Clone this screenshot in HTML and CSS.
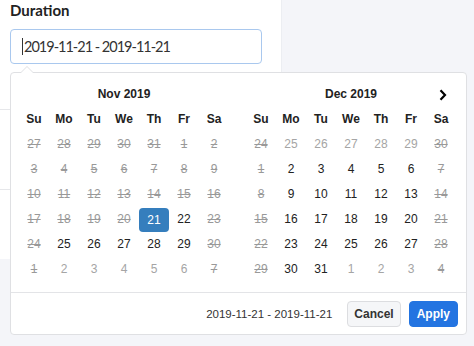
FILE: index.html
```html
<!DOCTYPE html>
<html lang="en">
<head>
  <meta charset="UTF-8" />
  <title>Duration picker</title>
  <link rel="stylesheet" href="styles.css">
</head>
<body>
  <div class="panel">
    <label class="label">Duration</label>
    <div class="field"><span class="caret"></span>2019-11-21 - 2019-11-21</div>
    <div class="panel-row first"></div>
    <div class="panel-row"></div>
  </div>

  <div class="picker">
    <div class="calendars">
      <div class="cal" id="calLeft">
        <div class="month">Nov 2019</div>
        <div class="nav"></div>
      </div>
      <div class="cal" id="calRight">
        <div class="month">Dec 2019</div>
        <div class="nav">
          <svg width="8" height="12" viewBox="0 0 8 12"><path d="M1.5 1.2 L6 6 L1.5 10.8" fill="none" stroke="#000" stroke-width="2.2"/></svg>
        </div>
      </div>
    </div>
    <div class="footer">
      <span class="range">2019-11-21 - 2019-11-21</span>
      <button class="btn cancel-btn">Cancel</button>
      <button class="btn apply-btn">Apply</button>
    </div>
  </div>

  <script>
    const days = ['Su', 'Mo', 'Tu', 'We', 'Th', 'Fr', 'Sa'];
    const minDate = new Date(2019, 10, 21);

    function renderMonth(el, year, month) {
      days.forEach(d => {
        const th = document.createElement('div');
        th.className = 'dow';
        th.textContent = d;
        el.appendChild(th);
      });

      // like daterangepicker: a month that starts on Sunday still shows the week before
      const first = new Date(year, month, 1);
      const back = first.getDay() === 0 ? 7 : first.getDay();
      const start = new Date(year, month, 1 - back);

      for (let i = 0; i < 42; i++) {
        const d = new Date(start.getFullYear(), start.getMonth(), start.getDate() + i);
        const cell = document.createElement('div');
        cell.className = 'day';
        const weekend = d.getDay() === 0 || d.getDay() === 6;
        if (d.getMonth() !== month) cell.classList.add('off');
        if (d < minDate || weekend) cell.classList.add('disabled');
        if (d.getTime() === minDate.getTime() && d.getMonth() === month) cell.classList.add('active');
        cell.textContent = d.getDate();
        el.appendChild(cell);
      }
    }

    renderMonth(document.getElementById('calLeft'), 2019, 10);
    renderMonth(document.getElementById('calRight'), 2019, 11);
  </script>
</body>
</html>
```

FILE: styles.css
```css
* {
  box-sizing: border-box;
  margin: 0;
  padding: 0;
}

body {
  background: #f4f5f9;
  font-family: 'Liberation Sans', Arial, sans-serif;
  color: #222;
  width: 474px;
  height: 346px;
  overflow: hidden;
  position: relative;
}

.panel {
  width: 282px;
  height: 259px;
  background: #fff;
  border-right: 1px solid #eceef2;
  padding: 1px 0 0 10px;
}

.label {
  display: block;
  font-family: Lato, 'Open Sans', sans-serif;
  font-weight: 700;
  font-size: 15px;
  line-height: 18px;
  color: #222;
}

.field {
  margin-top: 10px;
  width: 252px;
  height: 35px;
  border: 1px solid #a9c8ee;
  border-radius: 4px;
  padding-left: 11px;
  font-family: Lato, 'Open Sans', sans-serif;
  font-size: 14.5px;
  letter-spacing: -1px;
  line-height: 33px;
  color: #333;
  display: flex;
  align-items: center;
}

.caret {
  display: inline-block;
  width: 1px;
  height: 17px;
  background: #333;
  margin-right: 1px;
}

.panel-row {
  height: 80px;
  border-bottom: 1px solid #e6e7ea;
  margin-left: -10px;
}

.panel-row.first {
  height: 46px;
}

.picker {
  position: absolute;
  left: 10px;
  top: 72px;
  width: 457px;
  background: #fff;
  border: 1px solid #dfe0e3;
  border-radius: 4px;
}

.picker::before,
.picker::after {
  content: '';
  position: absolute;
  border-left: 7px solid transparent;
  border-right: 7px solid transparent;
  left: 9px;
}

.picker::before {
  top: -7px;
  border-bottom: 7px solid #dfe0e3;
}

.picker::after {
  top: -6px;
  left: 10px;
  border-left-width: 6px;
  border-right-width: 6px;
  border-bottom: 6px solid #fff;
}

.calendars {
  display: flex;
  gap: 17px;
  padding: 9px 10px 10px 8px;
}

.cal {
  display: grid;
  grid-template-columns: repeat(7, 30px);
  grid-auto-rows: 25px;
  font-size: 12px;
  line-height: 25px;
  text-align: center;
}

.month {
  grid-column: 2 / 7;
  font-weight: 700;
  color: #222;
}

.nav {
  display: flex;
  align-items: center;
  justify-content: center;
  padding-left: 3px;
}

.dow {
  font-weight: 700;
  color: #222;
}

.day {
  color: #222;
}

.day.off {
  color: #a5a5a5;
}

.day.disabled {
  color: #999;
  text-decoration: line-through;
}

.day.active {
  background: #357ebd;
  color: #fff;
  border-radius: 4px;
  height: 24px;
  line-height: 24px;
  margin-top: 1px;
}

.footer {
  border-top: 1px solid #e3e4e7;
  padding: 8px 8px 7px;
  display: flex;
  justify-content: flex-end;
  align-items: center;
  gap: 8px;
  font-size: 12px;
}

.range {
  color: #333;
  font-size: 11.5px;
  margin-right: 7px;
}

.btn {
  height: 26px;
  padding: 0 6px;
  border-radius: 4px;
  font-family: 'Liberation Sans', Arial, sans-serif;
  font-size: 12px;
  font-weight: 700;
  cursor: pointer;
}

.cancel-btn {
  background: #f5f6f8;
  border: 1px solid #dcdde0;
  color: #333;
}

.apply-btn {
  background: #2374e1;
  border: 1px solid #2374e1;
  color: #fff;
  padding: 0 7px;
}
```
